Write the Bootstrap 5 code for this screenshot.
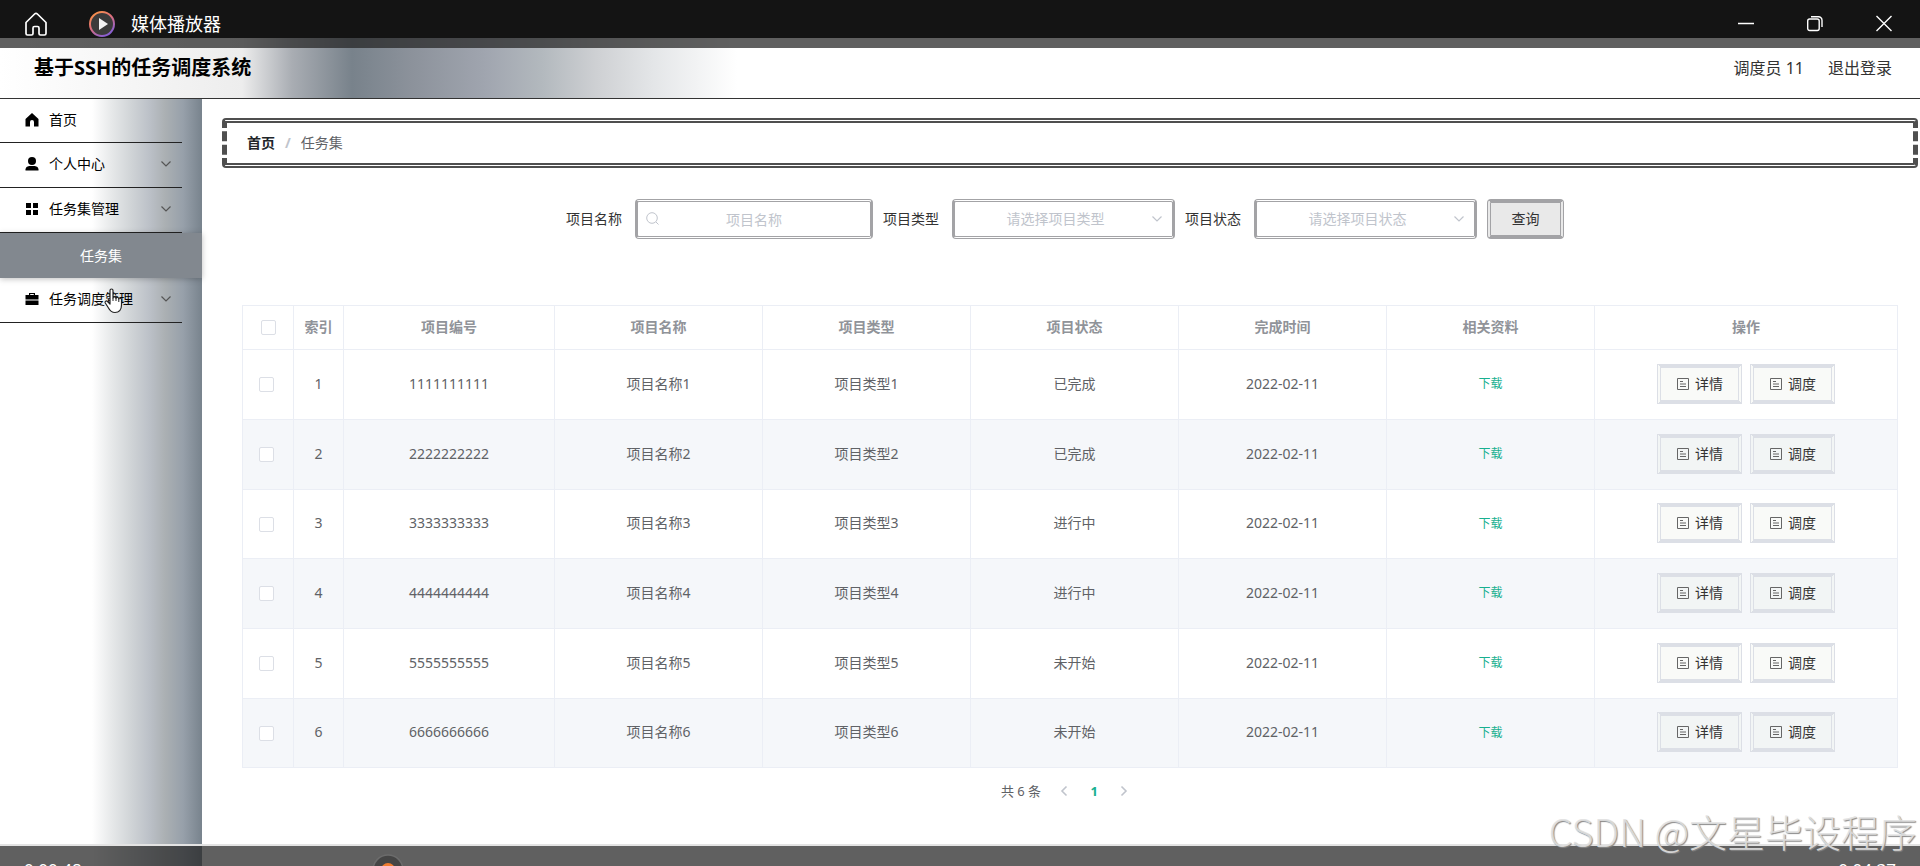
<!DOCTYPE html>
<html lang="zh-CN">
<head>
<meta charset="utf-8">
<meta name="viewport" content="width=device-width, initial-scale=1">
<title>基于SSH的任务调度系统</title>
<link href="https://cdn.jsdelivr.net/npm/bootstrap@5.3.0/dist/css/bootstrap.min.css" rel="stylesheet">
<style>
:root { --veil: rgba(37, 37, 37, .73); --rule: #ebeef5; --accent: #18b090; }
body { font-family: "Noto Sans", "Noto Sans CJK SC", sans-serif; font-size: 14px; line-height: 20px; color: #333; background: #fff; }
svg { display: block; flex: none; }

/* player window */
.titlebar { height: 38px; background: #141414; color: #fff; padding: 10px 28px 0 24px; }
.titlebar button, .pager button { background: none; border: 0; padding: 0; color: inherit; }
.player-logo { margin: 0 15px 0 40px; }
.player-name { font-size: 18px; line-height: 28px; }
.window-tools { gap: 53px; }
.veil-top { height: 10px; background: var(--veil); }
.player-foot { height: 22px; background: var(--veil); border-top: 2px solid #e3e3e3; background-clip: padding-box; overflow: hidden; color: #fff; font-size: 17px; z-index: 5; padding: 14px 24px 0; }
.knob { left: 20%; top: 8px; margin-left: -12px; }

/* application header */
.app-head { border-bottom: 1px solid #333; background: linear-gradient(90deg, #fff 0, #ededed 242px, #a9adb3 292px, #78828b 352px, #8c929b 412px, #a0a5af 485px, #b3b9be 543px, #ced0d3 596px, #e4e6e8 654px, #fff 737px); }
.app-head-row { height: 50px; padding: 0 28px 10px 34px; }
.app-title { font-size: 20px; line-height: 28px; color: #000; }
.app-head a { font-size: 16px; color: #333; }

/* side menu */
.side { width: 202px; flex: none; background: linear-gradient(90deg, #fff 92px, #e6e8e9 112px, #cfd3d6 132px, #bbc0c7 150px, #abb0b3 165px, #97a0aa 183px, #78838d 202px); }
.side-item { height: 45px; width: 182px; border-bottom: 1px solid #222; padding: 0 10px 2px 25px; color: #000; gap: 10px; }
.side-item:first-child { height: 44px; }
.side-sub { height: 45px; background: #82888f; color: #fff; box-shadow: 0 1px 6px rgba(0, 0, 0, .25); }
.pointer { left: 104px; top: 189px; z-index: 3; }

/* content */
.page-main { padding: 19px 2px 30px 20px; min-width: 0; }
.crumb-box { height: 50px; border: 5px solid #4f4f4f; border-style: double dashed; border-radius: 4px; padding: 0 20px; gap: 10px; }
.crumb-box span { color: #606266; }
.crumb-box .slash { color: #c0c4cc; }
.filters { gap: 10px; margin-top: 31px; padding-right: 10px; }
.filters label { margin-right: 13px; }
.field { height: 40px; border: 3px solid #a3a3a6; border-style: double solid; border-radius: 4px; color: #c0c4cc; background: #fff; text-align: center; text-align-last: center; outline: 0; }
.field::placeholder { color: #c0c4cc; opacity: 1; }
input.field { width: 238px; padding: 0 30px; }
select.field { width: 223px; padding: 0 28px 0 12px; appearance: none; }
.lens { left: 11px; top: 13px; }
.caret { right: 12px; top: 16px; }
.btn-frame { height: 40px; border: 4px solid #a3a3a6; border-style: solid double; font-size: 14px; line-height: 20px; color: #333; }
.btn-query { width: 77px; border-radius: 4px; background: #e9e9e9; padding: 0; }
.btn-row { border-color: #dcdfe6; border-radius: 0; background: rgba(238, 240, 236, .35); padding: 0 15px; gap: 5px; }
.btn-row svg { color: #666; }

.task-wrap { padding: 0 20px; margin-top: 66px; }
.task-table { table-layout: fixed; color: #606266; text-align: center; border-collapse: collapse; }
.task-table th, .task-table td { border: 1px solid var(--rule); padding: 0 0 2px; vertical-align: middle; }
.task-table th { height: 44px; color: #909399; }
.task-table td { height: 70px; }
.task-table tr:nth-child(3n) td { height: 69px; }
.task-table tbody tr:nth-child(even) { background: #f5f7fa; }
.task-table .form-check-input { width: 15px; height: 15px; margin: 0; border: 1px solid #dcdfe6; border-radius: 2px; vertical-align: middle; }
.task-table td:first-child { padding-right: 3px; }
.task-table td a { font-size: 12px; color: var(--accent); }
.c-check { width: 51px; } .c-index { width: 50px; } .c-code { width: 211px; } .c-act { width: 303px; }
.pager { margin-top: 11px; font-size: 13px; height: 24px; color: #606266; }
.pager button { width: 30px; }
.pager .now { color: var(--accent); }
.mark-text { right: 3px; bottom: 11px; font: 300 38px/48px "Noto Sans CJK SC", sans-serif; color: rgba(225, 225, 225, .9); text-shadow: 1px 1px 1px #888; z-index: 6; white-space: nowrap; }
</style>
</head>
<body class="d-flex flex-column min-vh-100 position-relative">
<svg width="0" height="0" class="position-absolute" aria-hidden="true">
  <symbol id="doc" viewBox="0 0 14 14"><path d="M1.500 1.500h11v11h-11zM4 4.500h3M4 7h6M4 9.500h6" fill="none" stroke="currentColor"/></symbol>
  <symbol id="down" viewBox="0 0 12 8"><path d="M1.500 1.500 6 6l4.500-4.500" fill="none" stroke="currentColor" stroke-width="1.200"/></symbol>
</svg>

<div class="titlebar d-flex justify-content-between align-items-start">
  <div class="d-flex align-items-center">
    <button aria-label="主页"><svg width="24" height="26" viewBox="0 0 24 26"><path d="M2 11.500 10.600 3a2 2 0 0 1 2.800 0L22 11.500V22.500a1.500 1.500 0 0 1-1.500 1.500h-4a1.500 1.500 0 0 1-1.500-1.500V17a1.500 1.500 0 0 0-1.500-1.500h-3A1.500 1.500 0 0 0 9 17v5.500A1.500 1.500 0 0 1 7.500 24h-4A1.500 1.500 0 0 1 2 22.500z" fill="none" stroke="#fff" stroke-width="1.700" stroke-linejoin="round"/></svg></button>
    <svg class="player-logo" width="28" height="28" viewBox="0 0 28 28"><defs><linearGradient id="ring" x1="0" y1="0" x2=".6" y2="1"><stop offset="0" stop-color="#ff9a3c"/><stop offset=".5" stop-color="#e0707a"/><stop offset="1" stop-color="#8a5fd0"/></linearGradient></defs><circle cx="14" cy="14" r="12" fill="#3b3b3b" stroke="url(#ring)" stroke-width="2"/><path d="M11 8v12l9-6z" fill="#f2f2f2"/></svg>
    <span class="player-name">媒体播放器</span>
  </div>
  <div class="window-tools d-flex pt-1">
    <button aria-label="最小化"><svg width="16" height="20" viewBox="0 0 16 20"><path d="M0 9.500h16" stroke="#fff" stroke-width="1.500"/></svg></button>
    <button aria-label="还原"><svg width="16" height="20" viewBox="0 0 16 20" fill="none" stroke="#fff" stroke-width="1.400"><rect x=".7" y="5" width="11.500" height="11.500" rx="2"/><path d="M4 2.700h7.500a3.500 3.500 0 0 1 3.500 3.500V13"/></svg></button>
    <button aria-label="关闭"><svg width="16" height="20" viewBox="0 0 16 20"><path d="m.5 2 15 15m0-15-15 15" stroke="#fff" stroke-width="1.400"/></svg></button>
  </div>
</div>

<header class="app-head">
  <div class="veil-top"></div>
  <div class="app-head-row d-flex justify-content-between align-items-center">
    <h1 class="app-title fw-bold m-0">基于SSH的任务调度系统</h1>
    <nav class="d-flex gap-4">
      <a href="#" class="text-decoration-none">调度员 11</a>
      <a href="#" class="text-decoration-none">退出登录</a>
    </nav>
  </div>
</header>

<div class="d-flex flex-grow-1">
  <nav class="side position-relative">
    <a href="#" class="side-item d-flex align-items-center text-decoration-none"><svg width="14" height="14" viewBox="0 0 14 14"><path d="M7 0 .5 6v7.500H5V9a2 2 0 0 1 4 0v4.500h4.500V6z"/></svg>首页</a>
    <a href="#" class="side-item d-flex align-items-center text-decoration-none"><svg width="14" height="14" viewBox="0 0 14 14"><circle cx="7" cy="4" r="4"/><path d="M.5 13.500v-1C.5 10 3 9 5 9h4c2 0 4.500 1 4.500 3.500v1z"/></svg>个人中心<svg class="ms-auto" width="12" height="8" color="#555"><use href="#down"/></svg></a>
    <a href="#" class="side-item d-flex align-items-center text-decoration-none"><svg width="14" height="14" viewBox="0 0 14 14"><path d="M1 1h5v5H1zM8 1h5v5H8zM1 8h5v5H1zM8 8h5v5H8z"/></svg>任务集管理<svg class="ms-auto" width="12" height="8" color="#555"><use href="#down"/></svg></a>
    <a href="#" class="side-sub d-flex align-items-center justify-content-center text-decoration-none">任务集</a>
    <a href="#" class="side-item d-flex align-items-center text-decoration-none"><svg width="14" height="14" viewBox="0 0 14 14"><path d="M4 3V1h6v2h3.500v4.500H.5V3zm1.200 0h3.600V2H5.200zM.5 8.500h13V13H.5z" fill-rule="evenodd"/></svg>任务调度管理<svg class="ms-auto" width="12" height="8" color="#555"><use href="#down"/></svg></a>
    <svg class="pointer position-absolute" width="20" height="26" viewBox="0 0 20 26"><path d="M6 2.500C6 .5 9 .5 9 2.500V10c0-1.500 3-1.500 3 .3 0-1.300 2.800-1.200 2.800.6 0-1.300 2.700-1 2.700.8V17c0 5-2.500 7.500-6.500 7.500-3.500 0-5-1.500-6.500-4.500L1.300 15c-.8-1.700 1-2.700 2.200-1.500L6 16z" fill="#fff" stroke="#222" stroke-width="1.200" stroke-linejoin="round"/><path d="M9 10v3m3-3v3m2.800-2v3" stroke="#222"/></svg>
  </nav>

  <main class="page-main flex-grow-1">
    <nav class="crumb-box d-flex align-items-center" aria-label="breadcrumb">
      <a href="#" class="text-decoration-none fw-bold text-dark">首页</a><span class="slash fw-bold">/</span><span>任务集</span>
    </nav>

    <form class="filters d-flex justify-content-center align-items-center">
      <div class="d-flex align-items-center"><label for="f-name">项目名称</label><div class="position-relative"><input id="f-name" class="field" type="text" placeholder="项目名称"><svg class="lens position-absolute" width="13" height="13" viewBox="0 0 13 13"><circle cx="6" cy="6" r="5.300" fill="none" stroke="#c0c4cc"/><path d="m10 10 2.500 2.500" stroke="#c0c4cc"/></svg></div></div>
      <div class="d-flex align-items-center"><label for="f-type">项目类型</label><div class="position-relative"><select id="f-type" class="field"><option>请选择项目类型</option></select><svg class="caret position-absolute" width="12" height="8" color="#c0c4cc"><use href="#down"/></svg></div></div>
      <div class="d-flex align-items-center"><label for="f-state">项目状态</label><div class="position-relative"><select id="f-state" class="field"><option>请选择项目状态</option></select><svg class="caret position-absolute" width="12" height="8" color="#c0c4cc"><use href="#down"/></svg></div></div>
      <button type="button" class="btn btn-frame btn-query">查询</button>
    </form>

    <div class="task-wrap">
      <table class="task-table w-100">
        <colgroup><col class="c-check"><col class="c-index"><col class="c-code"><col><col><col><col><col><col class="c-act"></colgroup>
        <thead><tr><th><input class="form-check-input" type="checkbox" aria-label="全选"></th><th>索引</th><th>项目编号</th><th>项目名称</th><th>项目类型</th><th>项目状态</th><th>完成时间</th><th>相关资料</th><th>操作</th></tr></thead>
        <tbody>
          <tr><td><input class="form-check-input" type="checkbox" aria-label="选择第1行"></td><td>1</td><td>1111111111</td><td>项目名称1</td><td>项目类型1</td><td>已完成</td><td>2022-02-11</td><td><a href="#" class="text-decoration-none">下载</a></td><td><div class="d-flex justify-content-center gap-2"><button class="btn btn-frame btn-row d-flex align-items-center"><svg width="14" height="14"><use href="#doc"/></svg>详情</button><button class="btn btn-frame btn-row d-flex align-items-center"><svg width="14" height="14"><use href="#doc"/></svg>调度</button></div></td></tr>
          <tr><td><input class="form-check-input" type="checkbox" aria-label="选择第2行"></td><td>2</td><td>2222222222</td><td>项目名称2</td><td>项目类型2</td><td>已完成</td><td>2022-02-11</td><td><a href="#" class="text-decoration-none">下载</a></td><td><div class="d-flex justify-content-center gap-2"><button class="btn btn-frame btn-row d-flex align-items-center"><svg width="14" height="14"><use href="#doc"/></svg>详情</button><button class="btn btn-frame btn-row d-flex align-items-center"><svg width="14" height="14"><use href="#doc"/></svg>调度</button></div></td></tr>
          <tr><td><input class="form-check-input" type="checkbox" aria-label="选择第3行"></td><td>3</td><td>3333333333</td><td>项目名称3</td><td>项目类型3</td><td>进行中</td><td>2022-02-11</td><td><a href="#" class="text-decoration-none">下载</a></td><td><div class="d-flex justify-content-center gap-2"><button class="btn btn-frame btn-row d-flex align-items-center"><svg width="14" height="14"><use href="#doc"/></svg>详情</button><button class="btn btn-frame btn-row d-flex align-items-center"><svg width="14" height="14"><use href="#doc"/></svg>调度</button></div></td></tr>
          <tr><td><input class="form-check-input" type="checkbox" aria-label="选择第4行"></td><td>4</td><td>4444444444</td><td>项目名称4</td><td>项目类型4</td><td>进行中</td><td>2022-02-11</td><td><a href="#" class="text-decoration-none">下载</a></td><td><div class="d-flex justify-content-center gap-2"><button class="btn btn-frame btn-row d-flex align-items-center"><svg width="14" height="14"><use href="#doc"/></svg>详情</button><button class="btn btn-frame btn-row d-flex align-items-center"><svg width="14" height="14"><use href="#doc"/></svg>调度</button></div></td></tr>
          <tr><td><input class="form-check-input" type="checkbox" aria-label="选择第5行"></td><td>5</td><td>5555555555</td><td>项目名称5</td><td>项目类型5</td><td>未开始</td><td>2022-02-11</td><td><a href="#" class="text-decoration-none">下载</a></td><td><div class="d-flex justify-content-center gap-2"><button class="btn btn-frame btn-row d-flex align-items-center"><svg width="14" height="14"><use href="#doc"/></svg>详情</button><button class="btn btn-frame btn-row d-flex align-items-center"><svg width="14" height="14"><use href="#doc"/></svg>调度</button></div></td></tr>
          <tr><td><input class="form-check-input" type="checkbox" aria-label="选择第6行"></td><td>6</td><td>6666666666</td><td>项目名称6</td><td>项目类型6</td><td>未开始</td><td>2022-02-11</td><td><a href="#" class="text-decoration-none">下载</a></td><td><div class="d-flex justify-content-center gap-2"><button class="btn btn-frame btn-row d-flex align-items-center"><svg width="14" height="14"><use href="#doc"/></svg>详情</button><button class="btn btn-frame btn-row d-flex align-items-center"><svg width="14" height="14"><use href="#doc"/></svg>调度</button></div></td></tr>
        </tbody>
      </table>
      <div class="pager d-flex justify-content-center align-items-center">
        <span class="me-2">共 6 条</span>
        <button class="d-flex justify-content-center" aria-label="上一页"><svg width="8" height="12" viewBox="0 0 8 12"><path d="M6.500 1.500 2 6l4.500 4.500" fill="none" stroke="#c0c4cc" stroke-width="1.600"/></svg></button>
        <button class="now fw-bold">1</button>
        <button class="d-flex justify-content-center" aria-label="下一页"><svg width="8" height="12" viewBox="0 0 8 12"><path d="M1.500 1.500 6 6l-4.500 4.500" fill="none" stroke="#c0c4cc" stroke-width="1.600"/></svg></button>
      </div>
    </div>
  </main>
</div>

<footer class="player-foot position-absolute bottom-0 start-0 w-100 d-flex justify-content-between">
  <span>0:00:48</span><span>0:04:37</span>
  <svg class="knob position-absolute" width="32" height="32" viewBox="0 0 32 32"><circle cx="16" cy="16" r="15" fill="#454545" stroke="#6c6c6c" stroke-width="1.500"/><circle cx="16" cy="16" r="7" fill="#f07c30"/></svg>
</footer>
<div class="mark-text position-absolute">CSDN @文星毕设程序</div>
<script src="https://cdn.jsdelivr.net/npm/bootstrap@5.3.0/dist/js/bootstrap.bundle.min.js"></script>
</body>
</html>
